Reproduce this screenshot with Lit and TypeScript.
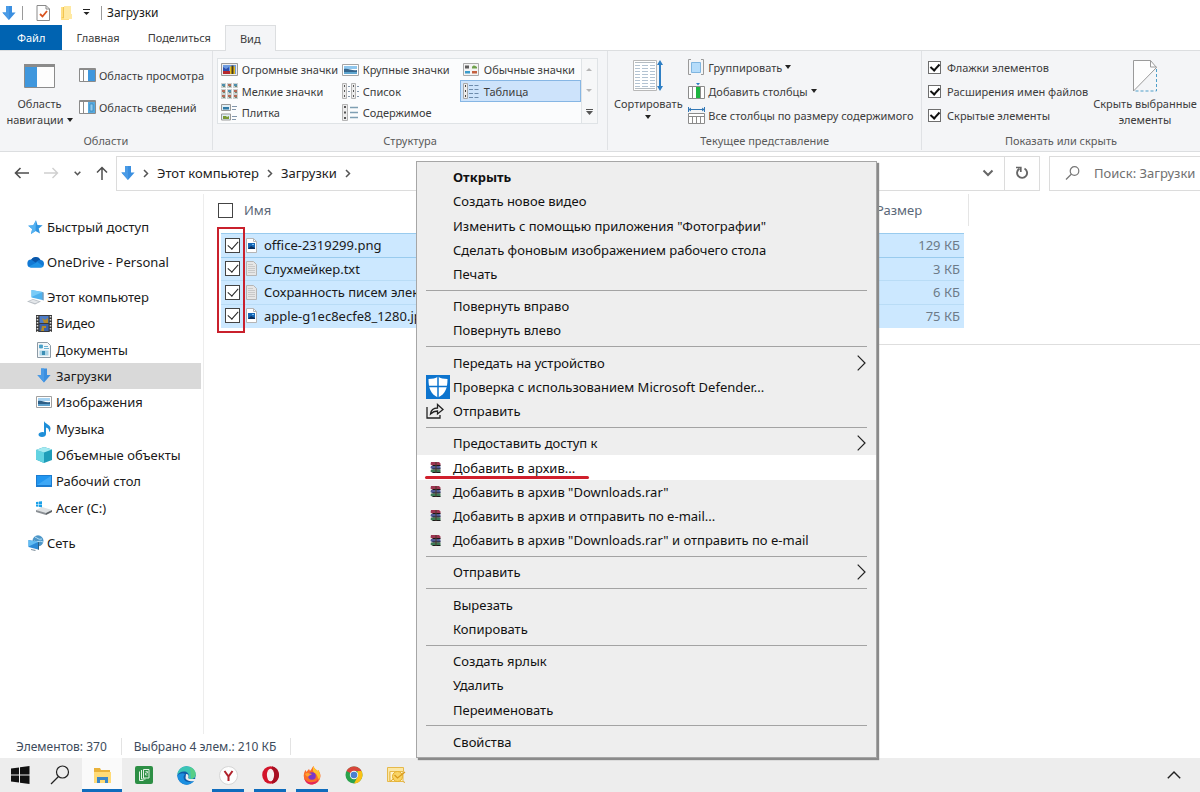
import { LitElement, html, css, nothing, TemplateResult } from "lit";
import { customElement } from "lit/decorators.js";
import { classMap } from "lit/directives/class-map.js";

const base = css`
  * { box-sizing: border-box; }
  svg { display: block; flex: none; }
  button, input, table, a {
    font: inherit;
    color: inherit;
  }
  button {
    background: none;
    border: 0;
    padding: 0;
    margin: 0;
    text-align: left;
  }
  a { text-decoration: none; }
`;

const downArrow = (w: number, h: number) => html`<svg width=${w} height=${h} viewBox="0 0 14 15" aria-hidden="true">
  <path d="M4 .5h6v6.500h3.600L7 14.500.4 7H4z" fill="#3b8fe0"/><path d="M4 .5h3v14L.4 7H4z" fill="#4a9be6"/></svg>`;
const caret = html`<svg width="6" height="4" viewBox="0 0 6 4" aria-hidden="true"><path d="M0 0h6L3 4z" fill="#222"/></svg>`;

const icons: Record<string, TemplateResult> = {
  docCheck: html`<svg width="14" height="16" viewBox="0 0 14 16"><path d="M1 .5h9L13.500 4v11.500H1z" fill="#fff" stroke="#8a8a8a"/><path d="M10 .5V4h3.500" fill="none" stroke="#8a8a8a"/><path d="M4 9l2.500 2.500L11 6" fill="none" stroke="#d9531e" stroke-width="1.800"/></svg>`,
  folder: html`<svg width="11" height="14" viewBox="0 0 11 14"><path d="M0 1h8v13H0z" fill="#ffdf84"/><path d="M3 0h7v8h1v5H3z" fill="#ffe9a2"/><path d="M0 12h3V1H2v10z" fill="#f1c550"/></svg>`,
  qat: html`<svg width="8" height="7" viewBox="0 0 8 7"><path d="M0 .5h7" stroke="#222"/><path d="M.500 3h6L3.500 6z" fill="#222"/></svg>`,
  navPane: html`<svg width="31" height="24" viewBox="0 0 31 24"><path d="M.5.5h30v23H.5z" fill="#fdfdfd" stroke="#8b8b8b"/><path d="M0 0h31v3H0z" fill="#8b8b8b"/><path d="M1 3h12v20H1z" fill="#3f97dd"/></svg>`,
  preview: html`<svg width="17" height="14" viewBox="0 0 17 14"><path d="M.5.5h16v13H.5z" fill="#fff" stroke="#8b8b8b"/><path d="M.5 1.500h16M4.500 2v11" stroke="#8b8b8b"/><path d="M9 2h7v11H9z" fill="#3f97dd"/></svg>`,
  details: html`<svg width="17" height="14" viewBox="0 0 17 14"><path d="M.5.5h16v13H.5z" fill="#fff" stroke="#8b8b8b"/><path d="M.5 1.500h16M4.500 2v11" stroke="#8b8b8b"/><path d="M9 2h7v11H9z" fill="#57aadf"/><path d="M11 4h3v7h-3z" fill="#8fcaf0" stroke="#2a78b0" stroke-width=".6"/></svg>`,
  huge: html`<svg width="17" height="13" viewBox="0 0 17 13"><path d="M.5.5h16v12H.5z" fill="#eee" stroke="#999"/><path d="M2 2h13v9H2z" fill="#6d9bdf"/><path d="M2 4l3 2 3-2v5H2z" fill="#2c4fae"/><path d="M2 8h7v3H2z" fill="#b6272d"/><path d="M9 3.500h5V11H9z" fill="#e6bb1c"/><path d="M10.500 2.500h2V11h-2z" fill="#4a3c1c"/></svg>`,
  small: html`<svg width="17" height="16" viewBox="0 0 17 16">${[0, 6, 12].map(x => [0, 6, 11].map(y => html`<svg x=${x} y=${y} width="5" height="5"><path d="M0 0h5v5H0z" fill="#ccd1d1"/><path d="M1 1h3v2H1z" fill=${(x + y) % 12 === 0 ? "#4d8fae" : "#b56a55"}/><path d="M2 3h2v1H2z" fill="#6d8b75"/></svg>`))}</svg>`,
  tile: html`<svg width="17" height="17" viewBox="0 0 17 17"><path d="M.5.5h9v6h-9zM.5 10h9v6h-9z" fill="#dfeef5" stroke="#999"/><path d="M2 3h6v2.500H2z" fill="#2f7aa6"/><path d="M2 12h3l1 1 2-1v3H2z" fill="#7c9a35"/><path d="M11 2.500h5M11 5.500h4M11 12.500h5M11 15.500h4" stroke="#8296aa"/></svg>`,
  large: html`<svg width="17" height="12" viewBox="0 0 17 12"><path d="M.5.5h16v11H.5z" fill="#fff" stroke="#a5a5a5"/><path d="M2 2h13v3H2z" fill="#8fc7ee"/><path d="M2 5c4-1 8 2 13 1v2H2z" fill="#36668d"/><path d="M2 8h13v2H2z" fill="#5fa6cf"/></svg>`,
  list: html`<svg width="17" height="16" viewBox="0 0 17 16"><path d="M.5.5h4v15h-4zM9.500.5h4v15h-4z" fill="#ececec" stroke="#b5b5b5"/><path d="M2 3h1M2 8h1M2 13h1M11 3h1M11 8h1M11 13h1" stroke="#555" stroke-width="2"/><path d="M6 3.500h2M6 8.500h2M6 13.500h2M15 3.500h2M15 8.500h2M15 13.500h2" stroke="#8296aa"/></svg>`,
  content: html`<svg width="17" height="17" viewBox="0 0 17 17"><path d="M.5.5h5v16h-5z" fill="#ececec" stroke="#b5b5b5"/><path d="M2 3h2M2 8.500h2M2 14h2" stroke="#555" stroke-width="2"/><path d="M8 3.500h8M8 8.500h8M8 13.500h8" stroke="#7f9fb3" stroke-width="1.500"/></svg>`,
  normal: html`<svg width="17" height="13" viewBox="0 0 17 13"><path d="M.5.5h15v12H.5z" fill="#f4f4f4" stroke="#aaa"/><path d="M2 2.500h4v3H2z" fill="#5e5e5e"/><path d="M9 4c1-2 3-2 5 0v1.500H9z" fill="#6fa14c"/><path d="M2 8h5v2.500H2z" fill="#3c9ccb"/><path d="M9 8h5v2.500H9z" fill="#c4603e"/></svg>`,
  table: html`<svg width="17" height="16" viewBox="0 0 17 16"><path d="M.5.5h4v15h-4z" fill="#ececec" stroke="#aaa"/><path d="M2 3h1M2 8h1M2 13h1" stroke="#444" stroke-width="2"/><path d="M6 2.500h4M11.500 2.500h4M6 6.500h4M11.500 6.500h4M6 10.500h4M11.500 10.500h4M6 14.500h4M11.500 14.500h4" stroke="#6d8bac"/></svg>`,
  sort: html`<svg width="30" height="31" viewBox="0 0 30 31"><path d="M.5.5h23v30H.5z" fill="#fff" stroke="#b8b8b8"/><path d="M2 2.500h20M2 28.500h20" stroke="#b4bcc2"/><path d="M2 5.500h5m2 0h6m2 0h5M2 8.500h5m2 0h6m2 0h5M2 11.500h5m2 0h6m2 0h5M2 14.500h5m2 0h6m2 0h5M2 17.500h5m2 0h6m2 0h5M2 20.500h5m2 0h6m2 0h5M2 23.500h5m2 0h6m2 0h5M2 26.500h5m2 0h6m2 0h5" stroke="#b3c3d2"/><path d="M27 0l3 5h-2v21h2l-3 5-3-5h2V5h-2z" fill="#2f7fc4"/></svg>`,
  group: html`<svg width="17" height="16" viewBox="0 0 17 16"><path d="M3 .5H.5v15H3M13 .5h2.500v15H13" fill="none" stroke="#9a9a9a"/><path d="M3.500 3.500h9v10h-9z" fill="#b5dcfa" stroke="#7fb5e0"/></svg>`,
  addCols: html`<svg width="17" height="16" viewBox="0 0 17 16"><path d="M.5 3.500h16v12H.5zM4.500 4v11M12.500 4v11" fill="#fff" stroke="#8b8b8b"/><path d="M8 4h4v11H8z" fill="#1db440"/><path d="M8 0h4l-2 2.500z" fill="#2f7fc4"/></svg>`,
  fitCols: html`<svg width="17" height="17" viewBox="0 0 17 17"><path d="M0 2.500h17M.5 0v5M16.500 0v5M3 1L1 2.500 3 4M14 1l2 1.500L14 4" fill="none" stroke="#3277b5"/><path d="M.5 6.500h16v10H.5zM.5 9.500h16M4.500 10v6M8.500 10v6M12.500 10v6" fill="#fff" stroke="#8b8b8b"/></svg>`,
  hide: html`<svg width="25" height="32" viewBox="0 0 25 32"><path d="M.5 31V.5h17l6 6.500z" fill="#fdfdfd"/><path d="M.5 31V.5h17l6 7zM17.500.5v6.500h6" fill="none" stroke="#9a9a9a"/><path d="M23.500 9v22H2" fill="none" stroke="#4f9fc9" stroke-dasharray="3 2"/></svg>`,
  star: html`<svg width="15" height="15" viewBox="0 0 15 15"><path d="M8 .3l1.500 4.800 5.200.2-4 3.300 1.300 5-4.500-2.700L3 14l1.200-5L.2 5.800l5.100-.6z" fill="#2f94e0"/><path d="M8 .3L7.500 10.900 3 14l1.200-5L.2 5.800l5.100-.6z" fill="#56b3f2"/></svg>`,
  cloud: html`<svg width="18" height="12" viewBox="0 0 18 12"><path d="M4.500 11.500a4 4 0 01-.3-8A5.300 5.300 0 0113.500 4a3.800 3.800 0 01.5 7.500z" fill="#1279d4"/><path d="M4.200 3.500A5.300 5.300 0 0113.500 4c-3 0-4 2-5 2.500z" fill="#0a56a8"/><path d="M2 10.500L10.500 6l6 4.500c-.7.700-1.500 1-2.500 1H4.500c-1 0-2-.5-2.500-1z" fill="#1f93e6"/></svg>`,
  pc: html`<svg width="17" height="15" viewBox="0 0 17 15"><path d="M4.500 0l11 2v8l-11-2.500z" fill="#4fb2ee"/><path d="M4.500 0l11 2-11 5z" fill="#79cbf7"/><path d="M15.500 2l1 .5v8l-1-.5z" fill="#2d6c9f"/><path d="M0 11.500l6-2.500 8 2.500-6 3z" fill="#b9bfc5"/><path d="M2 11.300l4-1.500 6 2-4 1.500z" fill="#e4e7ea"/></svg>`,
  video: html`<svg width="16" height="17" viewBox="0 0 16 17"><path d="M0 0h16v17H0z" fill="#3a3a3a"/><path d="M1.500 1v16M14.500 1v16" stroke="#ddd" stroke-width="1.500" stroke-dasharray="1.500 1.500"/><path d="M3.500 1h9v7h-9z" fill="#4d7cc7"/><path d="M3.500 9h9v7h-9z" fill="#3c62a8"/><path d="M6 3l3 2 3-2v5H8zM6 11h4v2H8v3H5z" fill="#b38a2b"/></svg>`,
  docs: html`<svg width="14" height="16" viewBox="0 0 14 16"><path d="M.5.5h10l3 3v12H.5z" fill="#f4f7f9" stroke="#8c9aa5"/><path d="M2.500 6V3h3v3zM7 4.500h4M7 6.500h5" fill="#4aa0c8" stroke="#4aa0c8" stroke-width=".8"/><path d="M2.500 8.500h9v5h-9z" fill="#a9d3e6"/><path d="M5 13V9h3v4z" fill="#3b8eb5"/></svg>`,
  down: downArrow(14, 15),
  pictures: html`<svg width="16" height="12" viewBox="0 0 16 12"><path d="M.5.5h15v11H.5z" fill="#fff" stroke="#a0a0a0"/><path d="M2 2h12v3H2z" fill="#a7d3f2"/><path d="M2 5c4-1 7 2 12 1v2H2z" fill="#2d5f87"/><path d="M2 8h12v2H2z" fill="#5da0cc"/></svg>`,
  music: html`<svg width="13" height="16" viewBox="0 0 13 16"><path d="M6 0c1 3 6 3.500 6.500 7 .2 2-1 4-1.500 4 .5-3-1.500-4-3-4.500V13c0 1.700-1.700 3-4 3s-3.500-1-3.500-2.500S2.500 11 4.500 11L6 11.300z" fill="#1f8fd8"/></svg>`,
  cube: html`<svg width="16" height="16" viewBox="0 0 16 16"><path d="M0 3l8-3 8 2.500V13l-8 3-8-3.500z" fill="#1f9db9"/><path d="M0 3l8 2.500V16l-8-3.500z" fill="#63d3e2"/><path d="M0 3l8-3 8 2.500-8 3z" fill="#a5eaf1"/></svg>`,
  desktop: html`<svg width="16" height="12" viewBox="0 0 16 12"><path d="M0 0h16v12H0z" fill="#1c7cd0"/><path d="M1 1h14v9H1z" fill="#2196f0"/><path d="M1 10L15 1v9z" fill="#3ea8f6"/></svg>`,
  disk: html`<svg width="16" height="14" viewBox="0 0 16 14"><path d="M0 9l6-3 10 3-6 4z" fill="#dfe2e4"/><path d="M0 9l10 3v2L0 11z" fill="#8b9095"/><path d="M10 12l6-3v2l-6 3z" fill="#5f6468"/><path d="M0 1l2.500-.3V3H0zM3 .6L6 .2V3H3zM0 3.500h2.500v2.300L0 5.500zM3 3.500h3v2.800L3 5.900z" fill="#1aa0e8"/></svg>`,
  network: html`<svg width="16" height="16" viewBox="0 0 16 16"><circle cx="10" cy="5.800" r="5.500" fill="#4d96c8"/><path d="M7 2c3 1 3 3 7 2M6 6c3 2 5-1 9 1" stroke="#b8e2f7" fill="none"/><path d="M.5 5l9.500 2v7.500L.5 12z" fill="#2c8ad6"/><path d="M.5 5l9.500 2-9.500 4.500z" fill="#63bdf3"/><path d="M10 7l1 .3V15l-1-.5z" fill="#2b5f86"/><path d="M3 14l5 1-1 1-4-1z" fill="#8797a3"/></svg>`,
  imageFile: html`<svg width="11" height="15" viewBox="0 0 11 15"><path d="M.5.5h7l3 3v11H.5z" fill="#fff" stroke="#b5b5b5"/><path d="M7.500.5v3h3" fill="none" stroke="#b5b5b5"/><path d="M2 5h7v6H2z" fill="#1566b5"/><path d="M2 11l3-3 4 2v1z" fill="#0c2f5c"/><path d="M6 6h2v1H6z" fill="#7cc4f5"/></svg>`,
  textFile: html`<svg width="11" height="15" viewBox="0 0 11 15"><path d="M.5.5h7l3 3v11H.5z" fill="#e6e6e6" stroke="#b5b5b5"/><path d="M2 3.500h5M2 5.500h7M2 7.500h7M2 9.500h7M2 11.500h7" stroke="#c9c9c9"/></svg>`,
  defender: html`<svg width="24" height="24" viewBox="0 0 24 24"><path d="M0 0h24v24H0z" fill="#0d74ce"/><path d="M12 1.500c2.500 1.800 5.500 2.500 9.500 2.500 0 9-2 15-9.500 18.500C4.500 19 2.500 13 2.500 4c4 0 7-.7 9.500-2.500z" fill="#fff"/><path d="M12 1v22M2 11.500h20" stroke="#0d74ce" stroke-width="1.500"/></svg>`,
  share: html`<svg width="18" height="16" viewBox="0 0 18 16"><path d="M1 4v11h13v-3M4.500 11c.5-4 3-6 7-6V1.500L17 6.500 11.500 11V8c-3 0-5 1-7 3z" fill="none" stroke="#222" stroke-width="1.300"/></svg>`,
  rar: html`<svg width="11" height="11" viewBox="0 0 11 11"><path d="M1 0h8l1.500 1.500v2H2L.5 2.500z" fill="#9c3450"/><path d="M1 4h8l1.500.5v2.500H2L.5 6z" fill="#4f5a96"/><path d="M1 7.500h8l1.500.5v2.500H2L.5 9.500z" fill="#3c7b55"/><path d="M2.500 3.500h8M2.500 7h8M2.500 10.500h8" stroke="#1a1a1a"/><path d="M5 0h2v11H5z" fill="#4b3a2c" opacity=".5"/></svg>`,
  search: html`<svg width="20" height="20" viewBox="0 0 20 20"><circle cx="12.500" cy="7" r="6" fill="none" stroke="#222" stroke-width="1.200"/><path d="M8.500 11.500L1 19" stroke="#222" stroke-width="1.300"/></svg>`,
  win: html`<svg width="19" height="18" viewBox="0 0 19 18"><path d="M0 2.500L8 1.400V8.500H0zM9 1.200L18.500 0v8.500H9zM0 9.500h8v7.100L0 15.500zM9 9.500h9.500V18L9 16.800z" fill="#111"/></svg>`,
  explorer: html`<svg width="17" height="15" viewBox="0 0 17 15"><path d="M0 0h6l1 2h9v3H0z" fill="#e9b23a"/><path d="M0 4h17v11H0z" fill="#ffdb77"/><path d="M3 9h11v6h-3v-3H6v3H3z" fill="#3a86c8"/></svg>`,
  green: html`<svg width="18" height="18" viewBox="0 0 18 18"><rect width="18" height="18" rx="2" fill="#2d8f45"/><path d="M4.500 5.500v9h4M6.500 4v9h4" fill="none" stroke="#e3f3e6"/><path d="M8.500 3.500h5.500v8.500H8.500z" fill="none" stroke="#e3f3e6"/><path d="M10.500 5.500h2v1.500h-2v2h2" fill="none" stroke="#e3f3e6" stroke-width=".8"/></svg>`,
  edge: html`<svg width="19" height="19" viewBox="0 0 19 19"><circle cx="9.500" cy="9.500" r="9.200" fill="#1273c4"/><path d="M.4 8.500C1 3.500 5 .3 9.500.3c5 0 9.200 3.500 9.200 8 0 3-2.200 4.700-4.700 4.700-2 0-3.200-.8-2.800-1.600 1.300-2-.5-4.900-4-4.900-3.200 0-5.400 1-6.800 2z" fill="#3ac5b5"/><path d="M13 1.200c3.500 1.300 5.700 4 5.700 7.100 0 3-2.200 4.700-4.700 4.700z" fill="#6bd468" opacity=".6"/><path d="M.4 9.500C2 6 5 5 8 5.500c3.200.7 4.500 3.500 3.200 5.900-1 2 2.500 2.500 5.800 1 1-.4 1.500 0 1 1-3 3-8 4-12 .6-2-2-2-5 0-7-3 .5-5 2-5.600 2.500z" fill="#0f5ba8"/><path d="M.4 9.500C2 8 5 7 8 8c-3 3-1 8 4 8 2 0 4-.5 5.500-2-1.500 3-5 5-8.500 4.600C4 18 1 14 .4 9.500z" fill="#1b8fe0"/><path d="M9 8c2.500 0 3 2 2.200 3.400-.4.800.8 1.600 2.800 1.600h5v1.500c-4 1.500-10 .5-10.500-2.500z" fill="#ededed"/></svg>`,
  yandex: html`<svg width="19" height="19" viewBox="0 0 19 19"><circle cx="9.500" cy="9.500" r="9" fill="#fdfdfd" stroke="#d5d5d5"/><path d="M5.500 5l4 5.500 4-5.500M9.500 10v5" fill="none" stroke="#b0202a" stroke-width="2"/></svg>`,
  opera: html`<svg width="17" height="18" viewBox="0 0 17 18"><ellipse cx="8.500" cy="9" rx="8.300" ry="8.800" fill="#d3142a"/><path d="M10 .3a8.300 8.800 0 010 17.400z" fill="#a80f22"/><ellipse cx="8.500" cy="9" rx="3.600" ry="6.300" fill="#f5f0f0"/></svg>`,
  firefox: html`<svg width="18" height="19" viewBox="0 0 18 19"><path d="M9 18.500A8.500 8.500 0 01.8 9c.2-2.500 1-4 2-5l.5 2L6 3l1 2c1.500-1 1.500-3 3.500-5 .5 2.500 3 3.500 4 5l.8-1c1.500 2.500 2.200 4 2.200 6A8.500 8.500 0 019 18.500z" fill="#fb6d29"/><path d="M10.500 0c.5 2.500 3 3.500 4 5l.8-1c2.500 4 2.500 8.500-.5 11.500 1-4-1-8-4-9-1.500-2-.8-5-.3-6.500z" fill="#ffc52e"/><circle cx="9" cy="10" r="3.800" fill="#7a39c9"/><path d="M2 8c3-2 5 0 7 0-1.500 1.500-3 1-3.500 2.500C3 11 3 9 2 8z" fill="#ffa22e"/><path d="M1 11c1 4 5 6 9 5 3 0 5-2 6-4-.5 4-4 6.500-7.500 6.500S1.500 16 1 11z" fill="#e2245c"/></svg>`,
  chrome: html`<svg width="18" height="18" viewBox="0 0 18 18"><circle cx="9" cy="9" r="8.500" fill="#2ba24c"/><path d="M9 9L1.500 5A8.500 8.500 0 0116.500 5H9z" fill="#d8453a"/><path d="M9 17.500l3.500-6.500V5h4A8.500 8.500 0 019 17.500z" fill="#fbc116"/><circle cx="9" cy="9" r="4.200" fill="#f7f7f7"/><circle cx="9" cy="9" r="3.300" fill="#4a80d0"/></svg>`,
  mail: html`<svg width="19" height="18" viewBox="0 0 19 18"><path d="M.5 1.500h16v4H3v10H.5z" fill="#fbe7a5" stroke="#e6b94a"/><path d="M3 5.500h13v10H3z" fill="#fff3cc" stroke="#e6b94a"/><circle cx="10.500" cy="10.500" r="5" fill="#f9d465" stroke="#e6b02c"/><path d="M7.500 9l3 3 7.500-6" fill="none" stroke="#d99a1c" stroke-width="1.300"/><path d="M3 15.500l4-3M16 15.500l2 1" stroke="#dfa528"/></svg>`,
  up: html`<svg width="14" height="8" viewBox="0 0 14 8"><path d="M.8 7.300L7 1l6.200 6.300" fill="none" stroke="#222" stroke-width="1.400"/></svg>`,
};

@customElement("explorer-ribbon")
class ExplorerRibbon extends LitElement {
  static styles = [base, css`
    :host { display: block; font-size: 11px; color: #3c3c3c; }
    .title { display: flex; align-items: center; height: 25px; font-size: 12px; color: #1a1a1a; background: #fff; padding-left: 2px; }
    .title .rule { width: 1px; height: 14px; background: #9a9a9a; }
    .quick { display: flex; align-items: center; gap: 11px; padding: 0 10px 0 13px; }
    .mark { padding-right: 6px; }
    .name { padding-left: 5px; }
    .tabs { display: flex; height: 26px; background: #fff; border-bottom: 1px solid #dcdee0; }
    .tab { height: 25px; padding: 0 14px; }
    .tab.file { background: #0063b1; color: #fff; padding: 0 17px; }
    .tab.on { height: 26px; background: #f4f5f7; border: 1px solid #dcdee0; border-bottom: 0; }
    .body { display: flex; height: 101px; background: #f4f5f7; border-bottom: 1px solid #dcdee0; }
    .group { display: flex; flex-direction: column; border-right: 1px solid #e0e2e5; margin-bottom: 1px; }
    .g1 { width: 213px; } .g2 { width: 396px; } .g3 { width: 314px; } .g4 { flex: 1; border: 0; min-width: 278px; }
    .inner { display: flex; flex: 1; }
    .caption { margin: 0; height: 18px; line-height: 18px; text-align: center; font-size: 11px; font-weight: 400; color: #5a5a5a; }
    .big { display: flex; flex-direction: column; align-items: center; justify-content: flex-start; text-align: center; line-height: 16px; white-space: nowrap; }
    .big svg { margin-bottom: 4px; }
    .pane { width: 79px; padding-top: 13px; }
    .pane > svg { margin-bottom: 8px; }
    .withcaret { display: flex; align-items: center; gap: 3px; }
    .withcaret svg { margin: 0; }
    .stack { display: flex; flex-direction: column; }
    .stack > * { display: flex; align-items: center; gap: 3px; white-space: nowrap; }
    .panes { padding-top: 8px; }
    .panes > * { height: 32px; }
    .gallery { display: grid; grid-template-columns: repeat(3, 121px) 1fr; grid-template-rows: 21px 22px 21px; margin: 7px 0 0 4px; border: 1px solid #dfe3e6; background: #fbfcfd; align-self: start; width: 381px; }
    .view { display: flex; align-items: center; gap: 4px; padding: 0 0 0 2px; border: 1px solid transparent; white-space: nowrap; }
    .view.on { background: #cde3fb; border-color: #86b6e4; }
    .scroll { grid-column: 4; grid-row: 1 / 4; display: grid; grid-template-rows: repeat(3, 1fr); border-left: 1px solid #dfe3e6; background: #f6f7f8; }
    .scroll button { display: grid; place-items: center; }
    .sort { width: 80px; padding-top: 9px; }
    .sort > svg { margin-bottom: 5px; }
    .sortcaret { padding-top: 3px; }
    .tools { padding-top: 4px; }
    .tools > *, .checks > * { height: 24px; }
    .checks { padding: 4px 0 0 6px; width: 168px; }
    .checks > * { gap: 6px; }
    input { appearance: none; width: 13px; height: 13px; margin: 0; border: 1px solid #6e6e6e; background: #fff; display: grid; place-items: center; }
    input:checked::before { content: ""; width: 4px; height: 7px; margin-bottom: 2px; border: solid #111; border-width: 0 2px 2px 0; transform: rotate(42deg); }
    .hide { padding-top: 9px; width: 110px; }
  `];
  render() {
    const views: [string, string, boolean?][] = [
      ["huge", "Огромные значки"], ["large", "Крупные значки"], ["normal", "Обычные значки"],
      ["small", "Мелкие значки"], ["list", "Список"], ["table", "Таблица", true],
      ["tile", "Плитка"], ["content", "Содержимое"],
    ];
    return html`
      <div class="title">
        <span class="mark">${downArrow(14, 16)}</span><span class="rule"></span>
        <div class="quick">${icons.docCheck}${icons.folder}${icons.qat}</div>
        <span class="rule"></span><span class="name">Загрузки</span>
      </div>
      <div class="tabs">
        <button class="tab file">Файл</button><button class="tab">Главная</button>
        <button class="tab">Поделиться</button><button class="tab on">Вид</button>
      </div>
      <div class="body">
        <section class="group g1">
          <div class="inner">
            <button class="big pane">${icons.navPane}<span>Область</span><span class="withcaret">навигации ${caret}</span></button>
            <div class="stack panes">
              <button>${icons.preview}Область просмотра</button>
              <button>${icons.details}Область сведений</button>
            </div>
          </div>
          <h2 class="caption">Области</h2>
        </section>
        <section class="group g2">
          <div class="inner"><div class="gallery">
            ${views.map(([icon, label, on]) => html`<button class=${classMap({ view: true, on: !!on })}>${icons[icon]}${label}</button>`)}
            <div class="scroll">
              <button aria-label="Вверх"><svg width="6" height="3"><path d="M0 3h6L3 0z" fill="#b5b5b5"/></svg></button>
              <button aria-label="Вниз"><svg width="6" height="3"><path d="M0 0h6L3 3z" fill="#b5b5b5"/></svg></button>
              <button aria-label="Ещё"><svg width="7" height="6"><path d="M0 .5h7" stroke="#555"/><path d="M0 2h7L3.500 6z" fill="#555"/></svg></button>
            </div>
          </div></div>
          <h2 class="caption">Структура</h2>
        </section>
        <section class="group g3">
          <div class="inner">
            <button class="big sort">${icons.sort}<span>Сортировать</span><span class="sortcaret">${caret}</span></button>
            <div class="stack tools">
              <button>${icons.group}<span>Группировать</span>${caret}</button>
              <button>${icons.addCols}<span>Добавить столбцы</span>${caret}</button>
              <button>${icons.fitCols}<span>Все столбцы по размеру содержимого</span></button>
            </div>
          </div>
          <h2 class="caption">Текущее представление</h2>
        </section>
        <section class="group g4">
          <div class="inner">
            <div class="stack checks">
              <label><input type="checkbox" checked>Флажки элементов</label>
              <label><input type="checkbox" checked>Расширения имен файлов</label>
              <label><input type="checkbox" checked>Скрытые элементы</label>
            </div>
            <button class="big hide">${icons.hide}<span>Скрыть выбранные</span><span>элементы</span></button>
          </div>
          <h2 class="caption">Показать или скрыть</h2>
        </section>
      </div>`;
  }
}

@customElement("address-bar")
class AddressBar extends LitElement {
  static styles = [base, css`
    :host { display: flex; align-items: center; height: 42px; font-size: 13px; color: #222; }
    .nav { display: flex; align-items: center; justify-content: space-between; width: 116px; padding: 0 8px 0 14px; }
    .box { display: flex; align-items: center; flex: 1; height: 35px; border: 1px solid #dcdcdc; }
    .path { display: flex; align-items: center; gap: 8px; flex: 1; padding-left: 4px; }
    .refresh { display: grid; place-items: center; width: 35px; height: 33px; border-left: 1px solid #dcdcdc; }
    .search { display: flex; align-items: center; gap: 14px; width: 151px; height: 35px; margin-left: 9px; padding-left: 15px; border: 1px solid #dcdcdc; border-right: 0; }
    input { flex: 1; min-width: 0; border: 0; padding: 0; outline: 0; background: none; }
    input::placeholder { color: #707070; opacity: 1; }
    .drop { padding-right: 10px; }
  `];
  render() {
    const chev = html`<svg width="6" height="9" viewBox="0 0 6 9"><path d="M1 1l3.500 3.500L1 8" fill="none" stroke="#555" stroke-width="1.500"/></svg>`;
    return html`
      <nav class="nav">
        <button aria-label="Назад"><svg width="15" height="12" viewBox="0 0 15 12"><path d="M15 6H1.500M6.500 1L1.500 6l5 5" fill="none" stroke="#4e4e4e" stroke-width="1.600"/></svg></button>
        <button aria-label="Вперёд"><svg width="15" height="12" viewBox="0 0 15 12"><path d="M0 6h13.500M8.500 1l5 5-5 5" fill="none" stroke="#cfcfcf" stroke-width="1.400"/></svg></button>
        <button aria-label="История"><svg width="7" height="5" viewBox="0 0 7 5"><path d="M.7.7l2.800 3 2.800-3" fill="none" stroke="#555" stroke-width="1.600"/></svg></button>
        <button aria-label="Вверх"><svg width="12" height="14" viewBox="0 0 12 14"><path d="M6 14V1.500M1 6.500l5-5 5 5" fill="none" stroke="#4e4e4e" stroke-width="1.500"/></svg></button>
      </nav>
      <div class="box">
        <div class="path">${downArrow(14, 16)}${chev}<a href="#">Этот компьютер</a>${chev}<a href="#">Загрузки</a>${chev}</div>
        <button class="drop" aria-label="Список адресов"><svg width="12" height="8" viewBox="0 0 12 8"><path d="M1.500 1.500L6 6l4.500-4.500" fill="none" stroke="#666" stroke-width="2"/></svg></button>
        <button class="refresh" aria-label="Обновить"><svg width="14" height="14" viewBox="0 0 14 14"><path d="M9.500 2.500A5 5 0 114.500 2.600" fill="none" stroke="#666" stroke-width="1.900"/><path d="M1 1.500h4.800V6" fill="none" stroke="#666" stroke-width="1.700"/></svg></button>
      </div>
      <div class="search"><svg width="15" height="14" viewBox="0 0 15 14"><circle cx="9.500" cy="5" r="4.300" fill="none" stroke="#777" stroke-width="1.200"/><path d="M6.500 8L1 13.500" stroke="#777" stroke-width="1.200"/></svg>
        <input type="text" aria-label="Поиск" placeholder="Поиск: Загрузки"></div>`;
  }
}

@customElement("nav-tree")
class NavTree extends LitElement {
  static styles = [base, css`
    :host { display: block; width: 204px; flex: none; border-right: 1px solid #ededed; padding: 20px 2px 0 0; font-size: 13px; color: #1a1a1a; }
    .group + .group { margin-top: 9px; }
    .item { display: flex; align-items: center; gap: 3px; height: 26px; padding-left: 27px; white-space: nowrap; }
    .children { display: grid; height: 211px; grid-auto-rows: 1fr; }
    .children .item { padding-left: 36px; height: auto; gap: 4px; }
    .icon { width: 17px; display: grid; place-items: center; }
    .children .icon { width: 16px; }
    .on { background: #d9d9d9; }
  `];
  render() {
    const item = (icon: string, label: string, on = false) =>
      html`<a href="#" class=${classMap({ item: true, on })}><span class="icon">${icons[icon]}</span>${label}</a>`;
    return html`
      <div class="group">${item("star", "Быстрый доступ")}</div>
      <div class="group">${item("cloud", "OneDrive - Personal")}</div>
      <div class="group">${item("pc", "Этот компьютер")}
        <div class="children">
          ${item("video", "Видео")}${item("docs", "Документы")}${item("down", "Загрузки", true)}
          ${item("pictures", "Изображения")}${item("music", "Музыка")}${item("cube", "Объемные объекты")}
          ${item("desktop", "Рабочий стол")}${item("disk", "Acer (C:)")}
        </div>
      </div>
      <div class="group">${item("network", "Сеть")}</div>`;
  }
}

@customElement("file-list")
class FileList extends LitElement {
  static styles = [base, css`
    :host { display: block; flex: 1; position: relative; min-width: 0; font-size: 13px; color: #1a1a1a; }
    .head { display: flex; align-items: center; width: 765px; height: 32px; padding-left: 14px; border-right: 1px solid #e5e5e5; color: #5b6878; }
    .head label { display: flex; align-items: center; gap: 11px; flex: 1; }
    .size { width: 92px; }
    input { appearance: none; width: 15px; height: 15px; margin: 0; border: 1px solid #444; background: #fff; display: grid; place-items: center; flex: none; }
    input:checked::before { content: ""; width: 5px; height: 9px; margin-bottom: 3px; border: solid #222; border-width: 0 1px 1px 0; transform: rotate(42deg); }
    table { border-collapse: separate; border-spacing: 0; width: 743px; height: 95px; margin: 7px 0 0 17px; background: #cce8ff; }
    td { padding: 0; border-bottom: 1px solid #b9dcf6; vertical-align: middle; line-height: 18px; }
    tr:first-child td { border-top: 1px solid #99cbee; border-bottom-color: #99cbee; }
    tr:last-child td { border-bottom-color: transparent; }
    .file { display: flex; align-items: center; padding-left: 4px; }
    .file svg { margin: 0 7px 0 6px; }
    .file label { white-space: nowrap; }
    .kb { text-align: right; padding-right: 4px; color: #6d7b88; }
    .frame { position: absolute; left: 13px; top: 33px; width: 28px; height: 106px; border: 2px solid #c9202c; }
    .edge { position: absolute; left: 660px; right: 0; top: 150px; border-top: 1px solid #dedede; }
  `];
  render() {
    const files: [string, string, string][] = [
      ["imageFile", "office-2319299.png", "129 КБ"], ["textFile", "Слухмейкер.txt", "3 КБ"],
      ["textFile", "Сохранность писем элект", "6 КБ"], ["imageFile", "apple-g1ec8ecfe8_1280.jp", "75 КБ"],
    ];
    return html`
      <div class="head"><label><input type="checkbox">Имя</label><span class="size">Размер</span></div>
      <table><tbody>${files.map(([icon, name, size], i) => html`<tr>
        <td><div class="file"><input type="checkbox" id="f${i}" checked>${icons[icon]}<label for="f${i}">${name}</label></div></td>
        <td class="kb">${size}</td></tr>`)}</tbody></table>
      <div class="frame"></div><div class="edge"></div>`;
  }
}

type Entry = null | { label: string; icon?: string; sub?: boolean; bold?: boolean; hot?: boolean };

@customElement("context-menu")
class ContextMenu extends LitElement {
  static styles = [base, css`
    :host { display: flex; flex-direction: column; padding: 3px 0; background: #eeeeee; border: 1px solid #a6a6a6; box-shadow: 2px 2px 1px #8a8a8a; font-size: 13px; color: #111; }
    .item { display: grid; grid-template-columns: 24px 1fr 10px; align-items: center; column-gap: 3px; flex: 3 1 0; width: 100%; padding: 0 9px; position: relative; white-space: nowrap; line-height: 18px; }
    .icon { display: flex; align-items: center; height: 18px; }
    .rar { padding-left: 4px; }
    .bold { font-weight: 700; }
    .hot { background: #fff; }
    .hot::after { content: ""; position: absolute; left: 8px; width: 164px; bottom: 1px; height: 3px; border-radius: 2px; background: #d0202c; }
    .sep { flex: 1 1 0; display: flex; align-items: center; padding: 0 9px; }
    .sep::before { content: ""; flex: 1; height: 1px; background: #a3a3a3; }
  `];
  entries: Entry[] = [
    { label: "Открыть", bold: true }, { label: "Создать новое видео" },
    { label: "Изменить с помощью приложения \"Фотографии\"" },
    { label: "Сделать фоновым изображением рабочего стола" }, { label: "Печать" }, null,
    { label: "Повернуть вправо" }, { label: "Повернуть влево" }, null,
    { label: "Передать на устройство", sub: true },
    { label: "Проверка с использованием Microsoft Defender...", icon: "defender" },
    { label: "Отправить", icon: "share" }, null,
    { label: "Предоставить доступ к", sub: true },
    { label: "Добавить в архив...", icon: "rar", hot: true },
    { label: "Добавить в архив \"Downloads.rar\"", icon: "rar" },
    { label: "Добавить в архив и отправить по e-mail...", icon: "rar" },
    { label: "Добавить в архив \"Downloads.rar\" и отправить по e-mail", icon: "rar" }, null,
    { label: "Отправить", sub: true }, null,
    { label: "Вырезать" }, { label: "Копировать" }, null,
    { label: "Создать ярлык" }, { label: "Удалить" }, { label: "Переименовать" }, null,
    { label: "Свойства" },
  ];
  render() {
    return this.entries.map(e => e === null ? html`<div class="sep" role="separator"></div>` : html`
      <button role="menuitem" class=${classMap({ item: true, bold: !!e.bold, hot: !!e.hot })}>
        <span class=${classMap({ icon: true, rar: e.icon === "rar" })}>${e.icon ? icons[e.icon] : nothing}</span>
        <span>${e.label}</span>
        ${e.sub ? html`<svg width="9" height="16" viewBox="0 0 9 16"><path d="M.7.7L8 8 .7 15.300" fill="none" stroke="#222" stroke-width="1.200"/></svg>` : nothing}
      </button>`);
  }
}

@customElement("task-bar")
class TaskBar extends LitElement {
  static styles = [base, css`
    :host { display: flex; height: 34px; background: #ededed; padding-right: 6px; }
    .app { display: grid; place-items: center; width: 40px; height: 34px; position: relative; }
    .apps { display: flex; gap: 2px; flex: 1; padding-left: 2px; }
    .current { background: #fafafa; }
    .open::after, .current::after { content: ""; position: absolute; left: 4px; right: 4px; bottom: 0; height: 3px; background: #0f6cbd; }
    .current::after { left: 0; right: 0; }
  `];
  render() {
    const apps: [string, string, string][] = [
      ["explorer", "current", "Проводник"], ["green", "", "Документы"], ["edge", "", "Edge"],
      ["yandex", "open", "Яндекс"], ["opera", "open", "Opera"], ["firefox", "open", "Firefox"],
      ["chrome", "", "Chrome"], ["mail", "", "Почта"],
    ];
    return html`
      <button class="app" aria-label="Пуск">${icons.win}</button>
      <button class="app" aria-label="Поиск">${icons.search}</button>
      <div class="apps">${apps.map(([icon, state, label]) => html`<button class="app ${state}" aria-label=${label}>${icons[icon]}</button>`)}</div>
      <button class="app" aria-label="Скрытые значки">${icons.up}</button>`;
  }
}

@customElement("app-root")
class AppRoot extends LitElement {
  static styles = [base, css`
    :host { display: flex; flex-direction: column; position: relative; height: 100vh; min-height: 640px; overflow: hidden; background: #fff; font-family: "Noto Sans", "Open Sans", sans-serif; }
    .main { display: flex; flex: 1; min-height: 0; }
    .status { display: flex; align-items: center; height: 24px; padding-left: 16px; font-size: 12px; color: #3d4b5c; }
    .status span { padding-right: 14px; border-right: 1px solid #e3e3e3; }
    .status span + span { margin-left: 12px; }
    context-menu { position: absolute; left: 416px; top: 161px; bottom: 34px; width: 461px; }
  `];
  render() {
    return html`
      <explorer-ribbon></explorer-ribbon>
      <address-bar></address-bar>
      <div class="main"><nav-tree></nav-tree><file-list></file-list></div>
      <footer class="status"><span>Элементов: 370</span><span>Выбрано 4 элем.: 210 КБ</span></footer>
      <task-bar></task-bar>
      <context-menu role="menu"></context-menu>`;
  }
}
